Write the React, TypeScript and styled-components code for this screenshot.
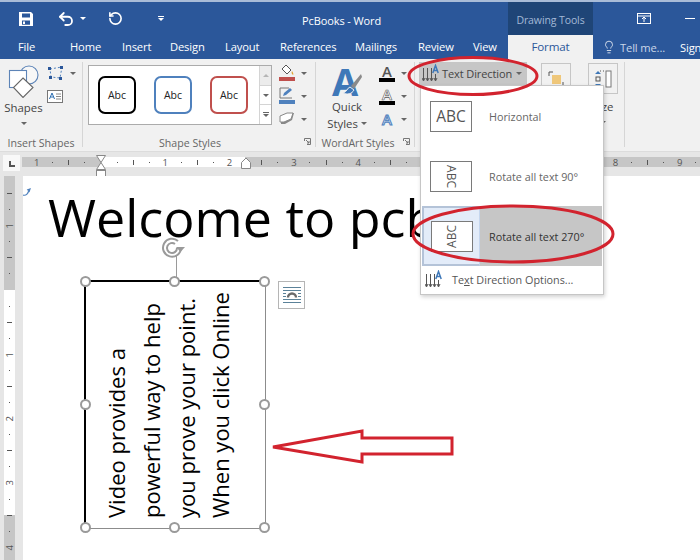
import React from "react";
import styled, { createGlobalStyle } from "styled-components";
import { Undo2, RotateCcw, Lightbulb } from "lucide-react";

const GlobalStyle = createGlobalStyle`
  html, body { margin: 0; padding: 0; background: #fff; }
  * { box-sizing: border-box; }
`;

const UI_FONT = `"Open Sans", "Noto Sans", sans-serif`;
const RED = "#d2232e";
const BLUE = "#2b579a";

const Page = styled.div`
  position: relative;
  width: 700px;
  height: 560px;
  overflow: hidden;
  display: flex;
  flex-direction: column;
  font-family: ${UI_FONT};
  background: #fff;
`;

const TitleBar = styled.div`
  height: 35px;
  flex: none;
  background: ${BLUE};
  border-top: 2px solid #a9bcd8;
  display: flex;
  align-items: center;
  color: #fff;
`;

const QuickAccess = styled.div`
  width: 302px;
  flex: none;
  display: flex;
  align-items: center;
  padding-left: 18px;
`;

const QuickButton = styled.span<{ $w: number }>`
  width: ${(p) => p.$w}px;
  flex: none;
  display: flex;
  align-items: center;
  gap: 5px;
`;

const Customize = styled.span`
  display: flex;
  flex-direction: column;
  align-items: center;
  gap: 1px;
`;

const CustomizeLine = styled.i`
  width: 6px;
  height: 1px;
  background: #fff;
`;

const Caret = styled.i<{ $color?: string }>`
  display: inline-block;
  flex: none;
  width: 0;
  height: 0;
  border-left: 3px solid transparent;
  border-right: 3px solid transparent;
  border-top: 3px solid ${(p) => p.$color || "#666"};
`;

const UpCaret = styled.i`
  width: 0;
  height: 0;
  border-left: 3px solid transparent;
  border-right: 3px solid transparent;
  border-bottom: 3px solid #b5b5b5;
`;

const DocTitle = styled.div`
  width: 206px;
  flex: none;
  font-size: 11px;
  padding-top: 4px;
  letter-spacing: -0.1px;
`;

const ContextTitle = styled.div`
  width: 85px;
  height: 33px;
  flex: none;
  background: #1f4577;
  color: #a3b8d6;
  font-size: 10.5px;
  text-align: center;
  line-height: 37px;
  letter-spacing: -0.1px;
`;

const WindowButtons = styled.div`
  flex: 1;
  display: flex;
  align-items: center;
  padding-left: 44px;
  gap: 34px;
`;

const TabRow = styled.div`
  height: 24px;
  flex: none;
  background: ${BLUE};
  display: flex;
  align-items: stretch;
  padding-left: 18px;
  color: #fff;
`;

const Tab = styled.div<{ $w: number; $active?: boolean }>`
  width: ${(p) => p.$w}px;
  flex: none;
  font-size: 11.2px;
  line-height: 24px;
  letter-spacing: -0.15px;
  white-space: nowrap;
  ${(p) => p.$active && `
    background: #f1f1f1;
    color: ${BLUE};
    text-align: center;
    font-size: 11.6px;
  `}
`;

const TellMe = styled.div`
  display: flex;
  align-items: center;
  padding-left: 9px;
  gap: 4px;
  font-size: 11.2px;
  letter-spacing: -0.15px;
  color: #c9d6e8;
  white-space: nowrap;
`;

const Sign = styled.span`
  color: #fff;
  margin-left: 11px;
`;

const Ribbon = styled.div`
  height: 93px;
  flex: none;
  background: #f1f1f1;
  display: flex;
  border-bottom: 1px solid #dcdcdc;
  color: #444;
`;

const Group = styled.div<{ $w: number; $plain?: boolean }>`
  position: relative;
  width: ${(p) => p.$w}px;
  flex: none;
  margin: 3px 0 4px;
  display: flex;
  flex-direction: column;
  border-right: ${(p) => (p.$plain ? "none" : "1px solid #d6d6d6")};
`;

const GroupBody = styled.div<{ $pad?: number }>`
  height: 76px;
  flex: none;
  display: flex;
  align-items: flex-start;
  padding-left: ${(p) => p.$pad ?? 0}px;
`;

const GroupLabel = styled.div<{ $right?: number }>`
  height: 10px;
  flex: none;
  display: flex;
  align-items: center;
  justify-content: center;
  padding-right: ${(p) => p.$right ?? 0}px;
  font-size: 10.6px;
  color: #666;
  white-space: nowrap;
`;

const Launcher = styled.svg`
  position: absolute;
  right: 4px;
  bottom: 2px;
`;

const ShapesColumn = styled.div`
  width: 47px;
  flex: none;
  display: flex;
  flex-direction: column;
  align-items: center;
  padding-top: 3px;
  font-size: 11.4px;
  color: #444;
`;

const ShapesText = styled.span`
  margin: 2px 0 7px;
  line-height: 15px;
`;

const SmallColumn = styled.div`
  display: flex;
  flex-direction: column;
  gap: 3px;
  padding-top: 1px;
`;

const IconRow = styled.div`
  height: 20px;
  display: flex;
  align-items: center;
  gap: 5px;
`;

const Spacer = styled.span`
  width: 2px;
  flex: none;
`;

const Gallery = styled.div`
  width: 184px;
  height: 60px;
  flex: none;
  display: flex;
  border: 1px solid #ababab;
  background: #fff;
  margin-top: 3px;
`;

const Swatches = styled.div`
  width: 170px;
  flex: none;
  display: flex;
  align-items: center;
  padding-left: 9px;
  gap: 18px;
`;

const Swatch = styled.div<{ $color: string }>`
  width: 38px;
  height: 38px;
  border: 2px solid ${(p) => p.$color};
  border-radius: 7px;
  display: flex;
  align-items: center;
  justify-content: center;
  font-size: 10.5px;
  color: #222;
`;

const Scroller = styled.div`
  flex: 1;
  display: flex;
  flex-direction: column;
  border-left: 1px solid #d4d4d4;
`;

const ScrollButton = styled.div<{ $disabled?: boolean }>`
  flex: 1;
  display: flex;
  flex-direction: column;
  align-items: center;
  justify-content: center;
  gap: 1px;
  background: ${(p) => (p.$disabled ? "#ececec" : "#fff")};
  & + & { border-top: 1px solid #d4d4d4; }
`;

const ScrollLine = styled.i`
  width: 6px;
  height: 1px;
  background: #666;
`;

const QuickStyles = styled.div`
  width: 62px;
  flex: none;
  display: flex;
  flex-direction: column;
  align-items: center;
  font-size: 11.4px;
  line-height: 17px;
  padding-top: 3px;
`;

const BigA = styled.div`
  position: relative;
  width: 32px;
  height: 33px;
  font-weight: 700;
  font-size: 38px;
  line-height: 33px;
  color: #3f78b8;
  padding-left: 1px;
`;

const Brush = styled.svg`
  position: absolute;
  left: 10px;
  top: 8px;
`;

const QuickLabel = styled.span`
  display: flex;
  align-items: center;
  gap: 3px;
  white-space: nowrap;
`;

const LetterA = styled.span<{ $outline?: boolean; $blue?: boolean }>`
  width: 18px;
  display: block;
  text-align: center;
  font-size: 15px;
  line-height: 14px;
  font-weight: 600;
  color: ${(p) => (p.$blue ? "#dbe7f5" : p.$outline ? "#fff" : "#555")};
  -webkit-text-stroke: ${(p) => (p.$blue ? "1px #4f81bd" : p.$outline ? "0.6px #555" : "0")};
`;

const UnderA = styled.div`
  width: 16px;
  height: 4px;
  background: #000;
  margin: 0 auto;
`;

const TextDirectionButton = styled.div`
  width: 108px;
  height: 23px;
  margin-left: 4px;
  flex: none;
  background: #c6c6c6;
  display: flex;
  align-items: center;
  padding-left: 3px;
  font-size: 11px;
  letter-spacing: -0.1px;
  color: #444;
  white-space: nowrap;
`;

const TextDirectionCaret = styled(Caret)`
  margin-left: 4px;
`;

const BoxedButton = styled.div`
  width: 30px;
  height: 31px;
  flex: none;
  margin-top: 1px;
  border: 1px solid #c6c6c6;
  display: flex;
  align-items: center;
  justify-content: center;
`;

const ArrangeSlot = styled.div`
  margin-left: 14px;
`;

const SizeColumn = styled.div`
  display: flex;
  flex-direction: column;
  align-items: center;
  margin-left: 17px;
  font-size: 11.4px;
`;

const SizeText = styled.span`
  margin: 5px 0 6px;
  line-height: 16px;
`;

const RulerRow = styled.div`
  height: 24px;
  flex: none;
  background: #e6e6e6;
  display: flex;
  align-items: flex-start;
`;

const Corner = styled.div`
  width: 17px;
  height: 16px;
  flex: none;
  margin: 3px 2px 0 3px;
  background: #f8f8f8;
  display: flex;
  align-items: center;
  justify-content: center;
`;

const CornerMark = styled.i`
  width: 6px;
  height: 6px;
  border-left: 2px solid #555;
  border-bottom: 2px solid #555;
  margin-top: 2px;
`;

const HRuler = styled.div`
  position: relative;
  flex: 1;
  height: 10px;
  margin-top: 5px;
  display: flex;
  padding-left: 6.6px;
  background: linear-gradient(to right, #c6c6c6 0 79px, #fff 79px 223px, #c6c6c6 223px);
`;

const HCell = styled.div`
  width: 16.08px;
  flex: none;
  display: flex;
  align-items: center;
  justify-content: center;
  font-size: 9.5px;
  color: #555;
`;

const Dot = styled.i`
  display: block;
  width: 1px;
  height: 1px;
  background: #555;
`;

const HDash = styled.i`
  display: block;
  width: 1px;
  height: 5px;
  background: #555;
`;

const Indent = styled.svg<{ $left: number }>`
  position: absolute;
  top: -2px;
  left: ${(p) => p.$left}px;
`;

const Workspace = styled.div`
  flex: 1;
  min-height: 0;
  display: flex;
`;

const VRulerBand = styled.div`
  width: 23px;
  flex: none;
  background: #e6e6e6;
  padding-left: 4px;
`;

const VRuler = styled.div`
  width: 11px;
  height: 384px;
  background: linear-gradient(to bottom, #c6c6c6 0 114px, #fff 114px 339px, #c6c6c6 339px);
  display: flex;
  flex-direction: column;
  padding-top: 9.5px;
`;

const VCell = styled.div`
  height: 16.08px;
  flex: none;
  display: flex;
  align-items: center;
  justify-content: center;
  font-size: 9.5px;
  color: #555;
`;

const VNumber = styled.span`
  writing-mode: vertical-rl;
  transform: rotate(180deg);
  line-height: 11px;
`;

const VDash = styled.i`
  display: block;
  width: 5px;
  height: 1px;
  background: #555;
`;

const Doc = styled.div`
  position: relative;
  flex: 1;
  min-width: 0;
  padding: 9px 0 0 25px;
  background: #fff;
  color: #000;
`;

const Anchor = styled.svg`
  position: absolute;
  top: 7px;
  left: 0;
`;

const Heading = styled.h1`
  margin: 0;
  font-family: ${UI_FONT};
  font-weight: 400;
  font-size: 52px;
  line-height: 64px;
  white-space: nowrap;
`;

const TextBox = styled.div`
  position: relative;
  width: 182px;
  height: 249px;
  margin: 31px 0 0 36px;
  border-top: 2px solid #000;
  border-left: 2px solid #000;
  border-right: 1px solid #8c8c8c;
  border-bottom: 1px solid #8c8c8c;
`;

const BoxText = styled.div`
  height: 100%;
  writing-mode: vertical-rl;
  transform: rotate(180deg);
  padding: 10px 13px 0 0;
  font-size: 22px;
  line-height: 34.8px;
  white-space: nowrap;
`;

const Handle = styled.i<{ $x: number; $y: number }>`
  position: absolute;
  left: ${(p) => p.$x}%;
  top: ${(p) => p.$y}%;
  width: 11px;
  height: 11px;
  margin: -6.5px 0 0 -6.5px;
  border: 2px solid #9a9a9a;
  border-radius: 50%;
  background: #fff;
`;

const RotateStem = styled.i`
  position: absolute;
  left: 50%;
  top: -27px;
  width: 1px;
  height: 26px;
  background: #9a9a9a;
`;

const RotateIcon = styled.svg`
  position: absolute;
  left: 74px;
  top: -46px;
`;

const LayoutOptions = styled.div`
  position: absolute;
  left: 192px;
  top: -1px;
  width: 27px;
  height: 28px;
  border: 1px solid #b5b5b5;
  background: #fff;
  display: flex;
  align-items: center;
  justify-content: center;
`;

const ArrowMark = styled.svg`
  position: absolute;
  left: 246px;
  top: 253px;
`;

const Menu = styled.div`
  position: absolute;
  left: 420px;
  top: 85px;
  width: 184px;
  height: 210px;
  background: #fff;
  border: 1px solid #c6c6c6;
  box-shadow: 1px 2px 4px rgba(0, 0, 0, 0.18);
  display: flex;
  flex-direction: column;
  padding: 0 1px 1px;
  color: #555;
  font-size: 10.8px;
`;

const MenuItem = styled.div<{ $active?: boolean }>`
  height: 60px;
  flex: none;
  display: flex;
  align-items: stretch;
  background: ${(p) => (p.$active ? "#c6c6c6" : "#fff")};
  color: ${(p) => (p.$active ? "#333" : "#666")};
`;

const MenuIconCell = styled.div<{ $active?: boolean }>`
  width: 58px;
  flex: none;
  display: flex;
  align-items: center;
  justify-content: center;
  ${(p) => p.$active && `
    background: #e3ecf9;
    border: 2px solid #b4c3d8;
    border-right: 1px solid #c5d6ee;
  `}
`;

const AbcBox = styled.div<{ $rotate: number }>`
  width: 42px;
  height: 31px;
  border: 1px solid #7a7a7a;
  background: #fff;
  display: flex;
  align-items: center;
  justify-content: center;
  font-size: ${(p) => (p.$rotate ? 12 : 15.5)}px;
  color: #555;
  span {
    display: block;
    transform: rotate(${(p) => p.$rotate}deg);
  }
`;

const MenuLabel = styled.div`
  display: flex;
  align-items: center;
  padding-left: 9px;
  white-space: nowrap;
`;

const MenuFooter = styled.div`
  flex: 1;
  display: flex;
  align-items: center;
  gap: 7px;
  padding-left: 3px;
  white-space: nowrap;
`;

const Ellipse = styled.svg<{ $x: number; $y: number }>`
  position: absolute;
  left: ${(p) => p.$x}px;
  top: ${(p) => p.$y}px;
  pointer-events: none;
`;

const TextDirectionIcon = () => (
  <svg width="20" height="20" viewBox="0 0 20 20" fill="none">
    <path d="M1.5 4v12M5.5 4v12M9.5 4v12M13.5 10v6" stroke="#555" strokeWidth="1" />
    <path d="M0 14l1.5 3 1.5-3M4 14l1.5 3 1.5-3M8 14l1.5 3 1.5-3M12 14l1.5 3 1.5-3" stroke="#555" strokeWidth="1" />
    <path d="M10.8 9L13.5 1.5 16.2 9M11.8 6.5h3.4" stroke="#3f78b8" strokeWidth="1.5" />
  </svg>
);

const SaveIcon = () => (
  <svg width="16" height="16" viewBox="0 0 16 16">
    <path fillRule="evenodd" fill="#fff" d="M1 1h12l2 2v12H1zM4 2.5v4h8v-4zM4 9.5v4.2h8V9.5z" />
    <rect x="5" y="10.5" width="2" height="2.5" fill="#fff" />
  </svg>
);

const ShapesIcon = () => (
  <svg width="32" height="33" viewBox="0 0 32 33" fill="none" stroke="#5d84b7" strokeWidth="1.1">
    <circle cx="21" cy="10" r="9" fill="#f7f7f7" />
    <rect x="1.5" y="5.5" width="17" height="17" fill="#fff" />
    <path d="M15 13l10 9.5-10 10-9.5-10z" fill="#fff" stroke="#666" />
  </svg>
);

const EditShapeIcon = () => (
  <svg width="18" height="16" viewBox="0 0 18 16" fill="none">
    <path d="M3 4L15 2 13 13 4 12z" stroke="#4f81bd" strokeDasharray="2 2" />
    <rect x="1" y="2" width="3" height="3" fill="#2b579a" />
    <rect x="13" y="1" width="3" height="3" fill="#2b579a" />
    <rect x="12" y="12" width="3" height="3" fill="#2b579a" />
    <rect x="2" y="11" width="3" height="3" fill="#2b579a" />
  </svg>
);

const TextBoxIcon = () => (
  <svg width="16" height="13" viewBox="0 0 16 13" fill="none">
    <rect x="0.5" y="0.5" width="15" height="12" fill="#fff" stroke="#777" />
    <path d="M2.5 9L5 3l2.5 6M3.5 7h3" stroke="#2b6cb0" />
    <path d="M9 4h5M9 6.5h5M9 9h5" stroke="#888" />
  </svg>
);

const FillIcon = () => (
  <svg width="17" height="18" viewBox="0 0 17 18" fill="none">
    <path d="M7 1l5 5-4 4-5-5z" fill="#fff" stroke="#555" />
    <path d="M13 7c1 2 2 3 1 4-1-1-2-2-1-4z" fill="#e3a22c" />
    <rect x="0" y="13" width="16" height="4" fill="#c0504d" />
  </svg>
);

const OutlineIcon = () => (
  <svg width="17" height="18" viewBox="0 0 17 18" fill="none">
    <path d="M1 1h9M1 1v10M1 11h12" stroke="#777" />
    <path d="M4 9l1-3 6-5 2 2-6 5z" fill="#4f81bd" />
    <rect x="0" y="13" width="16" height="4" fill="#4f81bd" />
  </svg>
);

const EffectsIcon = () => (
  <svg width="17" height="14" viewBox="0 0 17 14">
    <path d="M2 5l7-4h6l-2 7-7 4H2z" fill="#888" />
    <path d="M1 4l7-3h6l-2 6-7 3H1z" fill="#fff" stroke="#888" />
  </svg>
);

const ArrangeIcon = () => (
  <svg width="16" height="16" viewBox="0 0 16 16" fill="none">
    <path d="M1 5V1h4M15 11v4h-4" stroke="#555" />
    <rect x="4" y="4" width="9" height="9" fill="#efc77a" />
  </svg>
);

const SizeIcon = () => (
  <svg width="20" height="18" viewBox="0 0 20 18" fill="none">
    <rect x="13" y="1" width="5" height="16" stroke="#777" fill="#fff" />
    <path d="M5 1L2 4h6zM5 17l-3-3h6z" fill="#3f78b8" />
    <rect x="3" y="7" width="4" height="4" stroke="#555" />
    <path d="M7 1h5M7 17h5" stroke="#555" strokeDasharray="1 2" />
  </svg>
);

const LauncherIcon = () => (
  <Launcher width="7" height="7" viewBox="0 0 7 7" fill="none" stroke="#777">
    <path d="M0.5 3V0.5H6.5V6.5H3M2 2l3 3M3 5h2V3" />
  </Launcher>
);

const rulerTicks = (n: number) => (n % 4 === 0 ? "num" : n % 2 === 0 ? "dash" : "dot");

const labelFor = (k: number) => String(Math.abs(k / 4));

const hCells = Array.from({ length: 42 }, (_, i) => i - 4);
const vCells = Array.from({ length: 24 }, (_, i) => i - 6);

const App: React.FC = () => {
  return (
    <Page>
      <GlobalStyle />
      <TitleBar>
        <QuickAccess>
          <QuickButton $w={39}><SaveIcon /></QuickButton>
          <QuickButton $w={51}>
            <Undo2 size={18} strokeWidth={2.4} color="#fff" />
            <Caret $color="#fff" />
          </QuickButton>
          <QuickButton $w={50}>
            <RotateCcw size={15} strokeWidth={2.6} color="#fff" />
          </QuickButton>
          <QuickButton $w={10}>
            <Customize>
              <CustomizeLine />
              <Caret $color="#fff" />
            </Customize>
          </QuickButton>
        </QuickAccess>
        <DocTitle>PcBooks - Word</DocTitle>
        <ContextTitle>Drawing Tools</ContextTitle>
        <WindowButtons>
          <svg width="14" height="12" viewBox="0 0 14 12" fill="none" stroke="#fff">
            <rect x="0.5" y="0.5" width="13" height="10" />
            <path d="M0.5 3h13M7 9V4.5M5 6l2-2 2 2" />
          </svg>
          <svg width="10" height="2" viewBox="0 0 10 2"><rect width="10" height="1" fill="#fff" /></svg>
        </WindowButtons>
      </TitleBar>

      <TabRow>
        <Tab $w={52}>File</Tab>
        <Tab $w={52}>Home</Tab>
        <Tab $w={48}>Insert</Tab>
        <Tab $w={55}>Design</Tab>
        <Tab $w={55}>Layout</Tab>
        <Tab $w={75}>References</Tab>
        <Tab $w={63}>Mailings</Tab>
        <Tab $w={55}>Review</Tab>
        <Tab $w={35}>View</Tab>
        <Tab $w={85} $active>Format</Tab>
        <TellMe>
          <Lightbulb size={14} strokeWidth={1.3} color="#fff" />
          Tell me...
          <Sign>Sign in</Sign>
        </TellMe>
      </TabRow>

      <Ribbon>
        <Group $w={83}>
          <GroupBody>
            <ShapesColumn>
              <ShapesIcon />
              <ShapesText>Shapes</ShapesText>
              <Caret />
            </ShapesColumn>
            <SmallColumn>
              <IconRow><EditShapeIcon /><Caret /></IconRow>
              <IconRow><TextBoxIcon /></IconRow>
            </SmallColumn>
          </GroupBody>
          <GroupLabel>Insert Shapes</GroupLabel>
        </Group>

        <Group $w={233}>
          <GroupBody $pad={5}>
            <Gallery>
              <Swatches>
                <Swatch $color="#000">Abc</Swatch>
                <Swatch $color="#4f81bd">Abc</Swatch>
                <Swatch $color="#c0504d">Abc</Swatch>
              </Swatches>
              <Scroller>
                <ScrollButton $disabled><UpCaret /></ScrollButton>
                <ScrollButton><Caret /></ScrollButton>
                <ScrollButton><ScrollLine /><Caret /></ScrollButton>
              </Scroller>
            </Gallery>
            <SmallColumn>
              <IconRow><Spacer /><FillIcon /><Caret /></IconRow>
              <IconRow><Spacer /><OutlineIcon /><Caret /></IconRow>
              <IconRow><Spacer /><EffectsIcon /><Caret /></IconRow>
            </SmallColumn>
          </GroupBody>
          <GroupLabel $right={18}>Shape Styles</GroupLabel>
          <LauncherIcon />
        </Group>

        <Group $w={99}>
          <GroupBody>
            <QuickStyles>
              <BigA>
                A
                <Brush width="22" height="24" viewBox="0 0 22 24">
                  <path d="M20 1L10 13l3 3L21 4z" fill="#8a8a8a" />
                  <path d="M9 14c-3 1-3 5-7 6 4 2 9 1 11-3z" fill="#3f78b8" stroke="#f1f1f1" />
                </Brush>
              </BigA>
              <span>Quick</span>
              <QuickLabel>Styles <Caret /></QuickLabel>
            </QuickStyles>
            <SmallColumn>
              <IconRow>
                <div><LetterA>A</LetterA><UnderA /></div><Caret />
              </IconRow>
              <IconRow>
                <div><LetterA $outline>A</LetterA><UnderA /></div><Caret />
              </IconRow>
              <IconRow><LetterA $blue>A</LetterA><Caret /></IconRow>
            </SmallColumn>
          </GroupBody>
          <GroupLabel $right={14}>WordArt Styles</GroupLabel>
          <LauncherIcon />
        </Group>

        <Group $w={210}>
          <GroupBody>
            <TextDirectionButton>
              <TextDirectionIcon />
              Text Direction
              <TextDirectionCaret />
            </TextDirectionButton>
            <ArrangeSlot>
              <BoxedButton><ArrangeIcon /></BoxedButton>
            </ArrangeSlot>
            <SizeColumn>
              <BoxedButton><SizeIcon /></BoxedButton>
              <SizeText>Size</SizeText>
              <Caret />
            </SizeColumn>
          </GroupBody>
        </Group>
        <Group $w={75} $plain />
      </Ribbon>

      <RulerRow>
        <Corner><CornerMark /></Corner>
        <HRuler>
          {hCells.map((k) => {
            const t = rulerTicks(k);
            return (
              <HCell key={k}>
                {t === "num" && k !== 0 ? labelFor(k) : t === "dash" ? <HDash /> : t === "dot" ? <Dot /> : null}
              </HCell>
            );
          })}
          <Indent $left={72} width="14" height="24" viewBox="0 0 14 24" fill="#fff" stroke="#888">
            <path d="M2.5 0.5h9L7 7.5l4.5 7h-9L7 7.5z" />
            <rect x="2.5" y="15.5" width="9" height="7" />
          </Indent>
          <Indent $left={217} width="14" height="14" viewBox="0 0 14 14" fill="#fff" stroke="#888">
            <path d="M2.5 13.5V7.5L7 3l4.5 4.5v6z" />
          </Indent>
        </HRuler>
      </RulerRow>

      <Workspace>
        <VRulerBand>
          <VRuler>
            {vCells.map((k) => {
              const t = rulerTicks(k);
              return (
                <VCell key={k}>
                  {t === "num" && k !== 0 ? <VNumber>{labelFor(k)}</VNumber> : t === "dash" ? <VDash /> : t === "dot" ? <Dot /> : null}
                </VCell>
              );
            })}
          </VRuler>
        </VRulerBand>
        <Doc>
          <Anchor width="8" height="16" viewBox="0 0 8 16" fill="none" stroke="#4f81bd" strokeWidth="1.2">
            <path d="M0 12c3 1 5-1 6-5M6 9L7 6 4 7" />
          </Anchor>
          <Heading>Welcome to pcbooks</Heading>
          <TextBox>
            <BoxText>
              Video provides a
              <br />
              powerful way to help
              <br />
              you prove your point.
              <br />
              When you click Online
            </BoxText>
            <RotateStem />
            <RotateIcon width="26" height="24" viewBox="0 0 26 24" fill="none" stroke="#9a9a9a" strokeWidth="2">
              <path d="M21 12a9 9 0 1 1-3-7" />
              <path d="M17 12a5 5 0 1 1-2-4" />
              <path d="M16 11h9l-4.5 5z" fill="#9a9a9a" stroke="none" />
            </RotateIcon>
            <Handle $x={0} $y={0} />
            <Handle $x={50} $y={0} />
            <Handle $x={100} $y={0} />
            <Handle $x={0} $y={50} />
            <Handle $x={100} $y={50} />
            <Handle $x={0} $y={100} />
            <Handle $x={50} $y={100} />
            <Handle $x={100} $y={100} />
            <LayoutOptions>
              <svg width="20" height="20" viewBox="0 0 20 20" fill="none">
                <path d="M1 2.5h18M1 5.5h18M1 8.5h3M16 8.5h3M1 11.5h3M16 11.5h3M1 14.5h18M1 17.5h18" stroke="#5b8299" />
                <path d="M6 12.5a4 4 0 0 1 8 0" stroke="#6b6b6b" strokeWidth="2.4" />
              </svg>
            </LayoutOptions>
          </TextBox>
          <ArrowMark width="186" height="36" viewBox="0 0 186 36" fill="#fff" stroke={RED} strokeWidth="3">
            <path d="M4 18L93 2V9H183V25H93V33z" />
          </ArrowMark>
        </Doc>
      </Workspace>

      <Menu>
        <MenuItem>
          <MenuIconCell><AbcBox $rotate={0}><span>ABC</span></AbcBox></MenuIconCell>
          <MenuLabel>Horizontal</MenuLabel>
        </MenuItem>
        <MenuItem>
          <MenuIconCell><AbcBox $rotate={90}><span>ABC</span></AbcBox></MenuIconCell>
          <MenuLabel>Rotate all text 90°</MenuLabel>
        </MenuItem>
        <MenuItem $active>
          <MenuIconCell $active><AbcBox $rotate={270}><span>ABC</span></AbcBox></MenuIconCell>
          <MenuLabel>Rotate all text 270°</MenuLabel>
        </MenuItem>
        <MenuFooter>
          <TextDirectionIcon />
          <span>Te<u>x</u>t Direction Options...</span>
        </MenuFooter>
      </Menu>

      <Ellipse $x={406} $y={55} width="134" height="42" viewBox="0 0 134 42" fill="none" stroke={RED} strokeWidth="3">
        <ellipse cx="67" cy="21" rx="64" ry="18.5" />
      </Ellipse>
      <Ellipse $x={410} $y={203} width="206" height="62" viewBox="0 0 206 62" fill="none" stroke={RED} strokeWidth="3">
        <ellipse cx="103" cy="31" rx="100" ry="28" />
      </Ellipse>
    </Page>
  );
};

export default App;
